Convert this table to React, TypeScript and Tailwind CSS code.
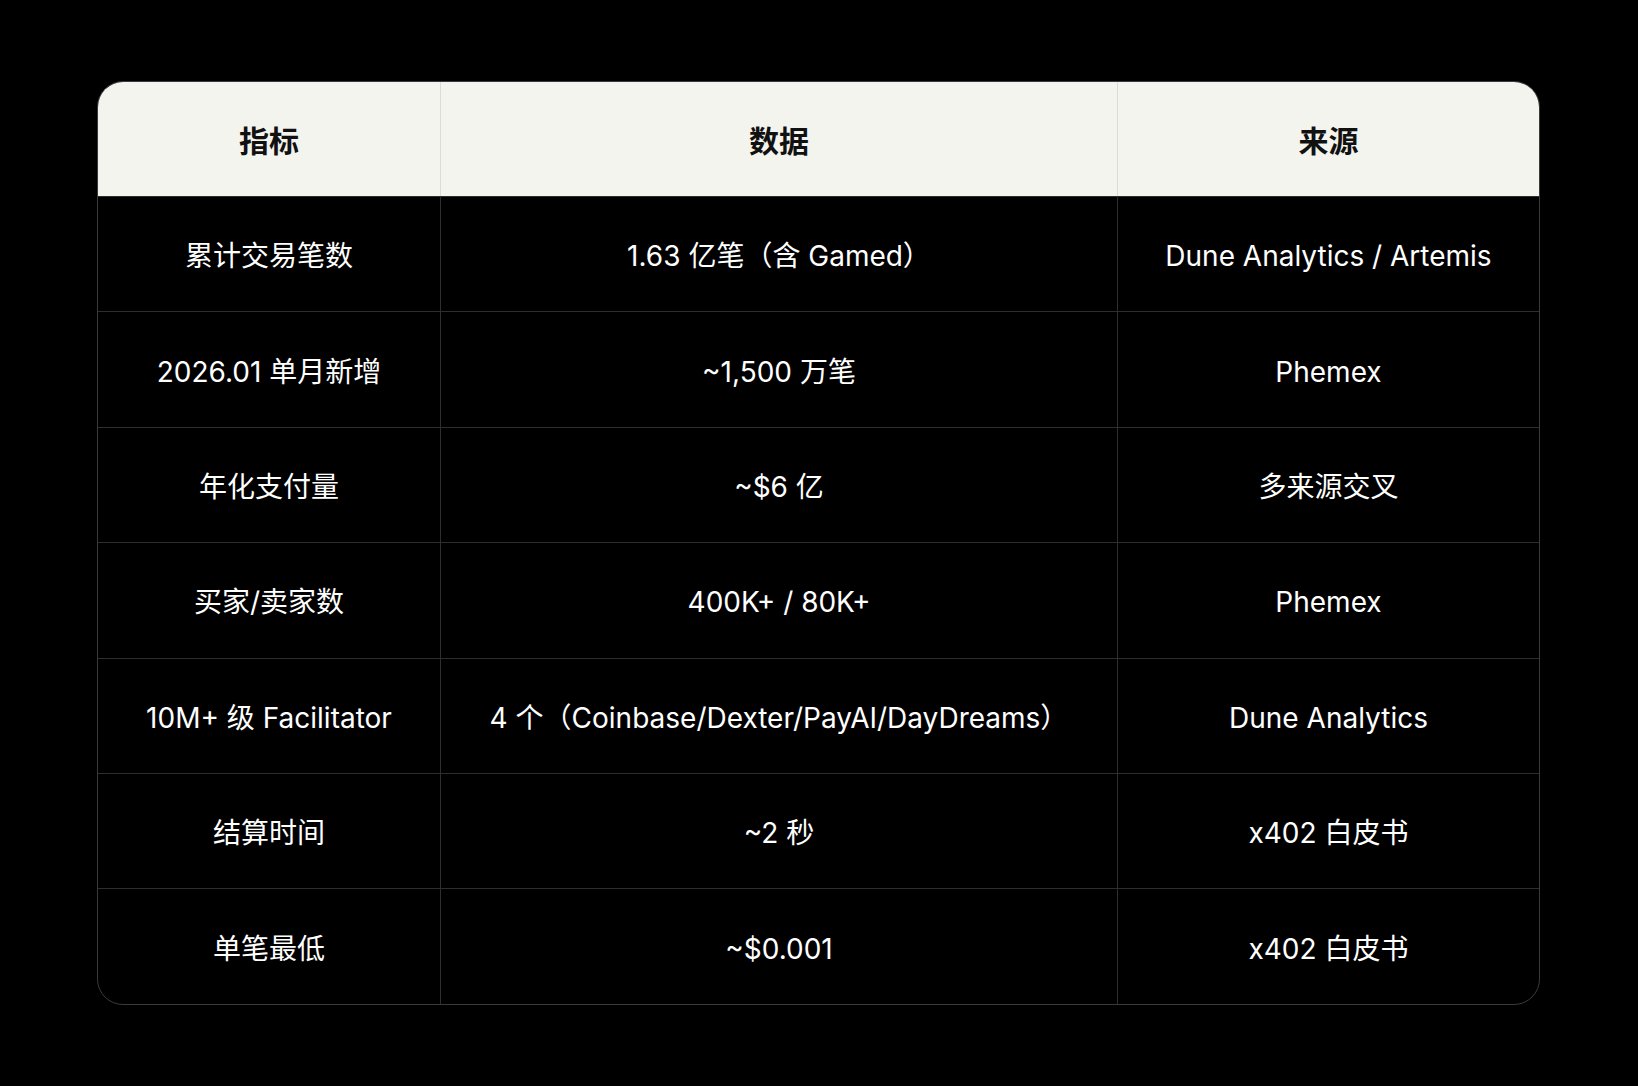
const rows: [string, string, string][] = [
  ['累计交易笔数', '1.63 亿笔（含 Gamed）', 'Dune Analytics / Artemis'],
  ['2026.01 单月新增', '~1,500 万笔', 'Phemex'],
  ['年化支付量', '~$6 亿', '多来源交叉'],
  ['买家/卖家数', '400K+ / 80K+', 'Phemex'],
  ['10M+ 级 Facilitator', '4 个（Coinbase/Dexter/PayAI/DayDreams）', 'Dune Analytics'],
  ['结算时间', '~2 秒', 'x402 白皮书'],
  ['单笔最低', '~$0.001', 'x402 白皮书'],
];

const font = { fontFamily: 'Inter, "Noto Sans CJK SC", sans-serif' };

export default function App() {
  return (
    <div className="min-h-screen w-full bg-black pt-[81px] pl-[97px]" style={font}>
      <div className="w-[1443px] rounded-[26px] border border-[#3a3a3a] overflow-hidden">
        <div className="grid grid-cols-[342px_677px_1fr] h-[114px] bg-[#f3f4ee] text-[30px] font-bold text-[#111]">
          <div className="flex items-center justify-center pt-1">指标</div>
          <div className="flex items-center justify-center pt-1 border-l border-[#dcdcd6]">数据</div>
          <div className="flex items-center justify-center pt-1 border-l border-[#dcdcd6]">来源</div>
        </div>
        {rows.map((r, i) => (
          <div
            key={i}
            className="grid grid-cols-[342px_677px_1fr] h-[115.4px] border-t border-[#2e2e2e] text-[28px] text-white"
          >
            <div className="flex items-center justify-center pt-1">{r[0]}</div>
            <div className="flex items-center justify-center pt-1 border-l border-[#2e2e2e]">{r[1]}</div>
            <div className="flex items-center justify-center pt-1 border-l border-[#2e2e2e]">{r[2]}</div>
          </div>
        ))}
      </div>
    </div>
  );
}
